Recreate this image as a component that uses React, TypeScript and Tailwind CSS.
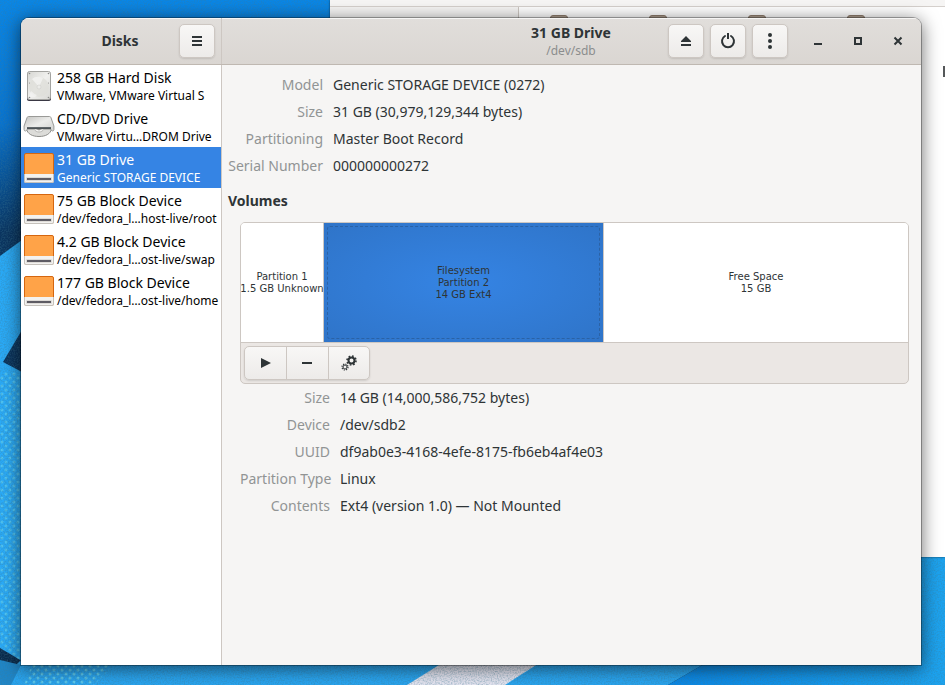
import React, { useId, useState } from 'react';

interface Drive {
  name: string;
  detail: string;
  kind: 'disk' | 'optical' | 'block';
}

const drives: Drive[] = [
  { name: '258 GB Hard Disk', detail: 'VMware, VMware Virtual S', kind: 'disk' },
  { name: 'CD/DVD Drive', detail: 'VMware Virtu…DROM Drive', kind: 'optical' },
  { name: '31 GB Drive', detail: 'Generic STORAGE DEVICE', kind: 'block' },
  { name: '75 GB Block Device', detail: '/dev/fedora_l…host-live/root', kind: 'block' },
  { name: '4.2 GB Block Device', detail: '/dev/fedora_l…ost-live/swap', kind: 'block' },
  { name: '177 GB Block Device', detail: '/dev/fedora_l…ost-live/home', kind: 'block' },
];

const driveInfo = [
  ['Model', 'Generic STORAGE DEVICE (0272)'],
  ['Size', '31 GB (30,979,129,344 bytes)'],
  ['Partitioning', 'Master Boot Record'],
  ['Serial Number', '000000000272'],
];

const volumeInfo = [
  ['Size', '14 GB (14,000,586,752 bytes)'],
  ['Device', '/dev/sdb2'],
  ['UUID', 'df9ab0e3-4168-4efe-8175-fb6eb4af4e03'],
  ['Partition Type', 'Linux'],
  ['Contents', 'Ext4 (version 1.0) — Not Mounted'],
];

const volumes = [
  { lines: ['Partition 1', '1.5 GB Unknown'], width: 'w-[83px] shrink-0' },
  { lines: ['Filesystem', 'Partition 2', '14 GB Ext4'], width: 'flex-[273] basis-0' },
  { lines: ['Free Space', '15 GB'], width: 'flex-[304] basis-0' },
];

const raised = 'border border-[#cdc7c2] bg-linear-to-b from-[#f8f7f6] to-[#edebe9] shadow-[0_1px_2px_rgba(0,0,0,0.12)]';

function DriveIcon({ kind }: { kind: Drive['kind'] }) {
  const id = useId();

  if (kind === 'disk') {
    return (
      <svg width="32" height="32" viewBox="0 0 32 32" className="shrink-0">
        <defs>
          <linearGradient id={id} x1="0" y1="0" x2="1" y2="1">
            <stop offset="0" stopColor="#d6d6d2" />
            <stop offset="0.5" stopColor="#f0f0ee" />
            <stop offset="1" stopColor="#d8d8d4" />
          </linearGradient>
        </defs>
        <rect x="4" y="3" width="24" height="28" rx="2" fill="#3a3844" />
        <rect x="4.500" y="1.500" width="23" height="28" rx="2" fill={`url(#${id})`} stroke="#a3a3a0" />
        <circle cx="16" cy="17" r="10" fill="#dededa" opacity="0.8" />
        <path d="M16 17L9 9q5-4 11-1z" fill="#f4f4f2" opacity="0.8" />
        <circle cx="16" cy="17" r="2" fill="#ebebe8" stroke="#cfcfcb" strokeWidth="0.6" />
        <path d="M6 27l2-6q3 3 6 4l-2 2z" fill="#f3f3f1" opacity="0.8" />
        <g fill="#8a8a88">
          <circle cx="6.500" cy="3.500" r="0.8" />
          <circle cx="25.500" cy="3.500" r="0.8" />
          <circle cx="6.500" cy="27.500" r="0.8" />
          <circle cx="25.500" cy="27.500" r="0.8" />
          <circle cx="6.500" cy="13" r="0.6" />
          <circle cx="25.500" cy="13" r="0.6" />
        </g>
      </svg>
    );
  }

  if (kind === 'optical') {
    return (
      <svg width="32" height="32" viewBox="0 0 32 32" className="shrink-0">
        <defs>
          <linearGradient id={id} x1="0" y1="0" x2="1" y2="1">
            <stop offset="0" stopColor="#c4c4c1" />
            <stop offset="0.5" stopColor="#ececea" />
            <stop offset="1" stopColor="#d2d2cf" />
          </linearGradient>
        </defs>
        <path d="M3.500 18c1 5 6 7.500 12.500 7.500S27.500 23 28.500 18z" fill="#dcdcd9" stroke="#8e8e8b" />
        <path d="M11 18c1 2 3 3 5 3s4-1 5-3z" fill="#f6f6f5" stroke="#b8b8b5" />
        <path d="M13 18h6l-3 1.500z" fill="#8a8a88" />
        <path d="M5.500 5.500h21q1 0 1.400 1l3 8.500v3.500q0 1.500-1.500 1.500-1.400 0-1.900-2.500H4.500Q4 20 2.600 20q-1.500 0-1.500-1.500V15l3-8.500q.4-1 1.400-1z" fill={`url(#${id})`} stroke="#9a9a97" />
        <path d="M4 17h24" stroke="#353c42" strokeWidth="1.600" />
      </svg>
    );
  }

  return (
    <svg width="32" height="32" viewBox="0 0 32 32" className="shrink-0">
      <rect x="1.500" y="1.500" width="29" height="29" rx="1.500" fill="#ffa348" stroke="#d5660f" />
      <path d="M1 22h30v7q0 2-2 2H3q-2 0-2-2z" fill="#f3f2f0" />
      <path d="M1.500 22v7q0 1.500 1.500 1.500h26q1.500 0 1.500-1.500v-7" fill="none" stroke="#c5c1bb" />
      <rect x="3" y="25" width="26" height="4" rx="1" fill="#dedbd7" />
      <rect x="4" y="26" width="24" height="2" fill="#5e5c64" />
    </svg>
  );
}

function Glyph({ children }: { children: React.ReactNode }) {
  return (
    <svg width="16" height="16" viewBox="0 0 16 16" fill="#2e3436" className="shrink-0">
      {children}
    </svg>
  );
}

function HeaderButton({ label, children }: { label: string; children: React.ReactNode }) {
  return (
    <button aria-label={label} className={`flex h-[34px] w-9 items-center justify-center rounded-[5px] ${raised}`}>
      {children}
    </button>
  );
}

function WindowButton({ label, children }: { label: string; children: React.ReactNode }) {
  return (
    <button aria-label={label} className="flex size-8 items-center justify-center rounded-[5px]">
      {children}
    </button>
  );
}

function InfoGrid({ rows, columns }: { rows: string[][]; columns: string }) {
  return (
    <dl className={`grid text-sm leading-[27px] ${columns}`}>
      {rows.map(([term, value]) => (
        <React.Fragment key={term}>
          <dt className="text-right whitespace-nowrap text-[#919494]">{term}</dt>
          <dd className="whitespace-nowrap">{value}</dd>
        </React.Fragment>
      ))}
    </dl>
  );
}

function Wallpaper() {
  return (
    <svg className="absolute inset-0 size-full" viewBox="0 0 945 685" preserveAspectRatio="none" aria-hidden="true">
      <defs>
        <linearGradient id="sky" x1="0" y1="0" x2="0" y2="1">
          <stop offset="0" stopColor="#0987e8" />
          <stop offset="0.18" stopColor="#0873d0" />
          <stop offset="0.34" stopColor="#0b3560" />
          <stop offset="1" stopColor="#0b2b4c" />
        </linearGradient>
        <linearGradient id="corner" x1="0" y1="0" x2="1" y2="0">
          <stop offset="0" stopColor="#0988e8" />
          <stop offset="1" stopColor="#1ca4f1" />
        </linearGradient>
        <pattern id="dots" width="8" height="8" patternUnits="userSpaceOnUse">
          <circle cx="2" cy="2" r="1.500" fill="#7fe4ee" />
          <circle cx="6" cy="6" r="1.500" fill="#7fe4ee" />
        </pattern>
        <filter id="grain" x="0" y="0" width="1" height="1">
          <feTurbulence type="fractalNoise" baseFrequency="0.7" numOctaves="2" />
          <feColorMatrix values="0 0 0 0 0.05  0 0 0 0 0.2  0 0 0 0 0.3  1.6 0 0 0 -0.6" />
        </filter>
      </defs>
      <rect width="945" height="685" fill="url(#sky)" />
      <path d="M0 256l22-16v90L3 362l19 10v289L0 648z" fill="#2aabf8" />
      <path d="M0 372h22v290L0 645z" fill="url(#dots)" opacity="0.45" />
      <path d="M21 660h690l-43 25H0l8-12z" fill="#29a6f2" />
      <path d="M0 660l21 5-10 20H0z" fill="#1f86c8" />
      <path d="M34 660h84l-24 25H24z" fill="url(#dots)" opacity="0.6" />
      <path d="M447 660h97l-39 25h-98z" fill="#e6e6f2" />
      <path d="M711 660h234v25H668z" fill="url(#corner)" />
      <path d="M918 550h27v115h-27z" fill="#1ca4f1" />
      <rect width="945" height="685" filter="url(#grain)" opacity="0.5" />
    </svg>
  );
}

// File manager left open behind the Disks window
function BackWindow() {
  return (
    <div className="absolute top-0 right-0 bottom-32 left-[330px] flex flex-col overflow-hidden bg-white shadow-[0_0_2px_rgba(0,0,0,0.6)]">
      <div className="h-[7px] shrink-0 border-b border-[#d5d0cc] bg-[#f6f5f4]" />
      <div className="flex flex-1">
        <div className="w-[189px] shrink-0 border-r border-[#cdc7c2] bg-[#f6f5f4]" />
        <div className="flex flex-1 gap-[81px] pt-2 pl-[31px]">
          {[0, 1, 2, 3].map((i) => (
            <div key={i} className="h-4 w-[18px] shrink-0 rounded-[3px] border border-[#8c7b6b] bg-[#ad9d8e]" />
          ))}
        </div>
      </div>
      <div className="absolute top-[66px] -right-2 h-[11px] w-[10px] border-2 border-[#55585a] bg-[#8a8c8c]" />
    </div>
  );
}

export default function App() {
  const [selected, setSelected] = useState(2);

  return (
    <div className="relative flex h-screen flex-col overflow-hidden bg-[#0b86e6] pt-[18px] pr-6 pb-5 pl-[21px] font-['Noto_Sans',sans-serif] text-[#2e3436]">
      <Wallpaper />
      <BackWindow />

      <main className="relative flex min-h-0 flex-1 flex-col overflow-hidden rounded-t-lg bg-[#f6f5f4] shadow-[0_0_0_1px_rgba(0,0,0,0.3),0_3px_18px_1px_rgba(0,0,0,0.55)]">
        <header className="flex h-[47px] shrink-0 border-b border-[#bfb8b1] bg-linear-to-b from-[#e1dedb] to-[#dad6d2] shadow-[inset_0_1px_#f6f5f4]">
          <div className="flex w-[201px] shrink-0 items-center border-r border-[#cdc7c2] pr-1.5">
            <h1 className="flex-1 pl-10 text-center text-sm font-bold">Disks</h1>
            <HeaderButton label="Menu">
              <Glyph>
                <path d="M3 3h10v2H3zM3 7h10v2H3zM3 11h10v2H3z" />
              </Glyph>
            </HeaderButton>
          </div>
          <div className="flex flex-1 items-center">
            <div className="flex-1 pl-[252px] text-center">
              <h2 className="text-sm leading-5 font-bold">31 GB Drive</h2>
              <p className="text-xs leading-4 text-[#8b8d8d]">/dev/sdb</p>
            </div>
            <div className="flex shrink-0 gap-1.5">
              <HeaderButton label="Eject">
                <Glyph>
                  <path d="M8 3l5 5v1H3V8zM3 11h10v2H3z" />
                </Glyph>
              </HeaderButton>
              <HeaderButton label="Power off">
                <Glyph>
                  <path d="M5 3a6 6 0 1 0 6 0" fill="none" stroke="#2e3436" strokeWidth="2" strokeLinecap="round" />
                  <path d="M7 0h2v6H7z" />
                </Glyph>
              </HeaderButton>
              <HeaderButton label="Drive options">
                <Glyph>
                  <circle cx="8" cy="2" r="2" />
                  <circle cx="8" cy="8" r="2" />
                  <circle cx="8" cy="14" r="2" />
                </Glyph>
              </HeaderButton>
            </div>
            <div className="flex shrink-0 gap-2 pr-[7px] pl-3.5">
              <WindowButton label="Minimize">
                <Glyph>
                  <path d="M4 10h8v2H4z" />
                </Glyph>
              </WindowButton>
              <WindowButton label="Maximize">
                <Glyph>
                  <path d="M4 4h8v8H4zm2 2v4h4V6z" fillRule="evenodd" />
                </Glyph>
              </WindowButton>
              <WindowButton label="Close">
                <Glyph>
                  <path d="M4.500 4.500l7 7M11.500 4.500l-7 7" stroke="#2e3436" strokeWidth="2" />
                </Glyph>
              </WindowButton>
            </div>
          </div>
        </header>

        <div className="flex min-h-0 flex-1">
          <nav className="w-[201px] shrink-0 border-r border-[#cdc7c2] bg-white text-black">
            {drives.map((drive, i) => (
              <button
                key={drive.name}
                onClick={() => setSelected(i)}
                className={`flex h-[41px] w-full items-center gap-0.5 pl-0.5 text-left whitespace-nowrap ${selected === i ? 'bg-[#3584e4] text-white' : ''}`}
              >
                <DriveIcon kind={drive.kind} />
                <span className="flex flex-col">
                  <span className="text-sm leading-5">{drive.name}</span>
                  <span className="text-xs leading-4">{drive.detail}</span>
                </span>
              </button>
            ))}
          </nav>

          <section className="min-w-0 flex-1 px-1.5 pt-1.5">
            <InfoGrid rows={driveInfo} columns="grid-cols-[95px_1fr] gap-x-2.5" />
            <h3 className="mt-2 text-sm leading-[27px] font-bold">Volumes</h3>
            <div className="mt-2 mr-1.5 ml-3 overflow-hidden rounded-[5px] border border-[#cdc7c2] bg-[#ebe7e4]">
              <div className="flex h-[120px] border-b border-[#cdc7c2] bg-white font-['DejaVu_Sans',sans-serif] text-[10px] leading-3">
                {volumes.map((volume, i) => (
                  <button
                    key={volume.lines[0]}
                    className={`flex items-center justify-center whitespace-nowrap ${volume.width} ${i < 2 ? 'border-r border-[#cdc7c2]' : ''} ${i === 1 ? 'bg-radial from-[#3584e4] to-[#2f74c8] p-[3px]' : ''}`}
                  >
                    <span className={`flex flex-col justify-center ${i === 1 ? 'size-full rounded-[3px] border border-dashed border-[#2b62a5]' : ''}`}>
                      {volume.lines.map((line) => (
                        <span key={line}>{line}</span>
                      ))}
                    </span>
                  </button>
                ))}
              </div>
              <div className="flex p-[3px]">
                <div className={`flex h-[34px] divide-x divide-[#cdc7c2] rounded-[5px] ${raised}`}>
                  <button aria-label="Mount" className="flex w-[42px] items-center justify-center">
                    <Glyph>
                      <path d="M3 3l10 5-10 5z" />
                    </Glyph>
                  </button>
                  <button aria-label="Delete partition" className="flex w-[42px] items-center justify-center">
                    <Glyph>
                      <path d="M2 7h10v2H2z" />
                    </Glyph>
                  </button>
                  <button aria-label="Partition options" className="flex w-10 items-center justify-center">
                    <Glyph>
                      <circle cx="10.500" cy="5.500" r="3" fill="none" stroke="#2e3436" strokeWidth="2" />
                      <circle cx="10.500" cy="5.500" r="4.500" fill="none" stroke="#2e3436" strokeWidth="1.600" strokeDasharray="1.700 1.834" />
                      <circle cx="4" cy="12" r="2" fill="none" stroke="#2e3436" />
                      <circle cx="4" cy="12" r="3" fill="none" stroke="#2e3436" strokeWidth="1.200" strokeDasharray="1.200 1.156" />
                    </Glyph>
                  </button>
                </div>
              </div>
            </div>
            <InfoGrid rows={volumeInfo} columns="grid-cols-[90px_1fr] gap-x-2.5 pl-3" />
          </section>
        </div>
      </main>
    </div>
  );
}
